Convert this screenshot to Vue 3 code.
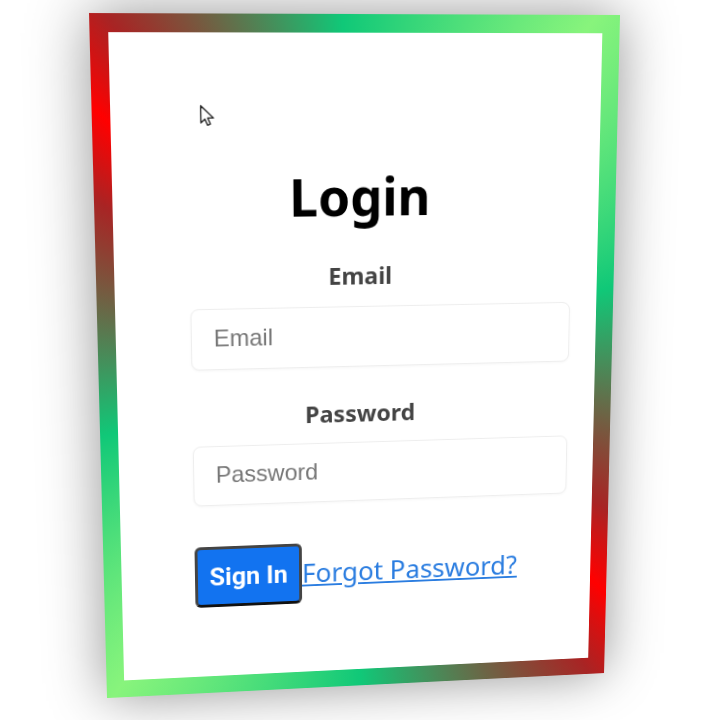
<template>
  <div class="stage">
    <div class="card" :style="{ transform: cardTransform }">
      <svg class="cursor" width="18" height="24" viewBox="0 0 18 24">
        <path d="M1.5 1.5V18l4-3.6 2.6 6 2.8-1.2-2.6-5.8h5.6z" fill="#fff" stroke="#222" stroke-width="1.3" stroke-linejoin="round" />
      </svg>
      <h1>Login</h1>
      <label class="field-label" for="email">Email</label>
      <input id="email" class="field" type="email" placeholder="Email" />
      <label class="field-label second" for="password">Password</label>
      <input id="password" class="field" type="password" placeholder="Password" />
      <div class="actions">
        <button class="submit" type="button">Sign In</button>
        <a class="forgot" href="#">Forgot Password?</a>
      </div>
    </div>
  </div>
</template>

<script setup>
const W = 531
const H = 690

// screen corners of the tilted card: top-left, top-right, bottom-right, bottom-left
const corners = [
  [89, 13],
  [620, 15],
  [604, 673],
  [107, 698],
]

function quadMatrix([[x0, y0], [x1, y1], [x2, y2], [x3, y3]]) {
  const dx1 = x1 - x2
  const dx2 = x3 - x2
  const dy1 = y1 - y2
  const dy2 = y3 - y2
  const sx = x0 - x1 + x2 - x3
  const sy = y0 - y1 + y2 - y3
  const den = dx1 * dy2 - dx2 * dy1
  const g = (sx * dy2 - dx2 * sy) / den
  const h = (dx1 * sy - sx * dy1) / den
  const a = x1 - x0 + g * x1
  const b = x3 - x0 + h * x3
  const d = y1 - y0 + g * y1
  const e = y3 - y0 + h * y3
  return [a / W, d / W, 0, g / W, b / H, e / H, 0, h / H, 0, 0, 1, 0, x0, y0, 0, 1]
}

const cardTransform = `matrix3d(${quadMatrix(corners).join(',')})`
</script>

<style scoped>
.stage {
  width: 720px;
  height: 720px;
  overflow: hidden;
  background: #fff;
}

.card {
  position: relative;
  box-sizing: border-box;
  width: 531px;
  height: 690px;
  padding-top: 125px;
  border: 18px solid transparent;
  background:
    linear-gradient(#fff, #fff) padding-box,
    conic-gradient(from 314deg, #f00 0deg, #a82424 10deg, #10c878 43deg, #88f47c 81deg, #10c878 121deg, #a82424 168deg, #f00 180deg, #a82424 190deg, #10c878 226deg, #88f47c 263deg, #10c878 301deg, #a82424 348deg, #f00 360deg) border-box;
  box-shadow: 0 0 54px rgba(0, 0, 0, 0.42);
  transform-origin: 0 0;
  font-family: "Noto Sans", sans-serif;
  text-align: center;
}

.cursor {
  position: absolute;
  top: 69px;
  left: 87px;
}

h1 {
  margin: 0 0 29px;
  font-size: 52px;
  line-height: 70px;
  font-weight: 700;
  color: #000;
}

.field-label {
  display: block;
  margin-bottom: 15px;
  font-size: 24px;
  line-height: 32px;
  font-weight: 700;
  color: #444;
}

.second {
  margin-top: 32px;
  margin-bottom: 14px;
}

.field {
  display: block;
  box-sizing: border-box;
  width: 392px;
  height: 62px;
  margin-left: 75px;
  padding: 0 22px 2px;
  border: 1px solid #eee;
  border-radius: 8px;
  background: #fff;
  box-shadow: 0 1px 3px rgba(0, 0, 0, 0.04);
  font-family: "Liberation Sans", Arial, sans-serif;
  font-size: 24px;
  outline: none;
}

.field::placeholder {
  color: #777;
}

.actions {
  display: flex;
  align-items: center;
  margin: 43px 0 0 75px;
}

.submit {
  box-sizing: border-box;
  width: 111px;
  height: 64px;
  border: 3px solid #444;
  border-bottom-color: #111;
  border-radius: 6px;
  background: #1273f0;
  color: #fff;
  font-family: Roboto, sans-serif;
  font-size: 26px;
  font-weight: 700;
}

.forgot {
  color: #2b7de0;
  font-size: 27.5px;
  line-height: 34px;
  text-decoration: underline;
}
</style>
